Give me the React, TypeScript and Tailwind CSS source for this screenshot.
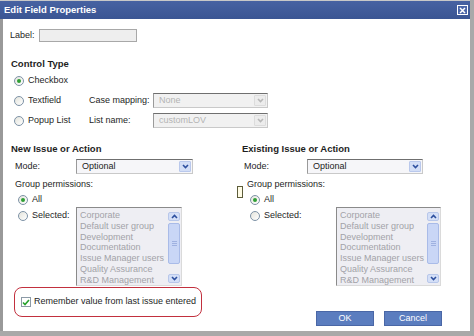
import React from 'react';

const groups = [
  'Corporate',
  'Default user group',
  'Development',
  'Documentation',
  'Issue Manager users',
  'Quality Assurance',
  'R&D Management',
];

function Radio({ checked }: { checked?: boolean }) {
  return (
    <span className="w-[10px] h-[10px] rounded-full border border-[#7d92a6] bg-linear-to-br from-[#e4e4dc] to-white flex items-center justify-center shrink-0">
      {checked && <span className="w-[4px] h-[4px] rounded-full bg-[#2f9f35]" />}
    </span>
  );
}

function Chevron({ up, color }: { up?: boolean; color: string }) {
  return (
    <svg width="7" height="5" viewBox="0 0 7 5">
      <path
        d={up ? 'M1 4 L3.5 1.5 L6 4' : 'M1 1 L3.5 3.5 L6 1'}
        fill="none"
        stroke={color}
        strokeWidth="1.6"
      />
    </svg>
  );
}

function Select({ value, disabled, className }: { value: string; disabled?: boolean; className: string }) {
  return (
    <div
      className={
        'h-[15px] flex items-center border border-[#c9c9c9] border-t-[#6f6f6f] border-l-[#9a9a9a] ' +
        (disabled ? 'bg-[#f1f1f1] ' : 'bg-[#f6f6f9] ') +
        className
      }
    >
      <span className={'flex-1 pl-[5px] ' + (disabled ? 'text-[#b4b4b4]' : 'text-[#222]')}>{value}</span>
      <span
        className={
          'w-[12px] h-[11px] mr-[1px] rounded-[1px] flex items-center justify-center border ' +
          (disabled ? 'bg-[#ececec] border-[#dcdcdc]' : 'bg-[#d3def6] border-[#b9c8ec]')
        }
      >
        <Chevron color={disabled ? '#b8b8b8' : '#2d4f9e'} />
      </span>
    </div>
  );
}

function ListBox({ className }: { className: string }) {
  return (
    <div className={'h-[79px] flex bg-[#eeeef3] border border-[#dadada] border-t-[#8a8a8a] border-l-[#8a8a8a] ' + className}>
      <div className="flex-1 pt-[2px] pl-[3px] text-[#a2a2a8] leading-[10.8px] whitespace-nowrap overflow-hidden">
        {groups.map((g) => (
          <div key={g}>{g}</div>
        ))}
      </div>
      <div className="w-[12px] mr-[1px] pt-[4px] pb-[2px] flex flex-col">
        <div className="h-[9px] rounded-[2px] bg-[#d4dff7] border border-[#b8c7ea] flex items-center justify-center">
          <Chevron up color="#2d4f9e" />
        </div>
        <div className="mt-[2px] h-[41px] rounded-[2px] bg-[#c9d6f6] border border-[#a9bbe8] flex flex-col items-center justify-center gap-[1px]">
          <span className="w-[5px] h-px bg-[#9fb1e0]" />
          <span className="w-[5px] h-px bg-[#9fb1e0]" />
          <span className="w-[5px] h-px bg-[#9fb1e0]" />
        </div>
        <div className="flex-1" />
        <div className="h-[9px] rounded-[2px] bg-[#d4dff7] border border-[#b8c7ea] flex items-center justify-center">
          <Chevron color="#2d4f9e" />
        </div>
      </div>
    </div>
  );
}

export default function App() {
  return (
    <div className="w-[474px] h-[336px] bg-[#a9a9a9] text-[9px] text-[#1e1e1e] font-['Liberation_Sans',Arial,sans-serif] overflow-hidden">
      <div className="w-[470px] h-[331px] bg-white flex flex-col">
        {/* title bar */}
        <div className="h-[19px] shrink-0 bg-linear-to-b from-[#4762a2] to-[#3a5593] flex items-center pl-[4px] pr-[2px] border-t border-[#c8c8c8]">
          <span className="flex-1 text-white font-bold text-[9.5px]">Edit Field Properties</span>
          <span className="w-[11px] h-[10px] border border-white bg-[#4b66a8] flex items-center justify-center">
            <svg width="7" height="7" viewBox="0 0 7 7">
              <path d="M1 1 L6 6 M6 1 L1 6" stroke="white" strokeWidth="1.5" />
            </svg>
          </span>
        </div>

        <div className="flex-1 flex flex-col border-l-[3px] border-[#999]">
          <div className="mt-[10px] h-[13px] flex items-center pl-[7px]">
            <span className="w-[29px]">Label:</span>
            <div className="w-[98px] h-[13px] bg-[#eeeeee] border border-[#a8a8a8]" />
          </div>

          <div className="mt-[17px] h-[10px] flex items-center pl-[8px] font-bold text-[9.5px]">Control Type</div>

          <div className="mt-[7px] h-[10px] flex items-center pl-[11px] gap-[4px]">
            <Radio checked />
            <span>Checkbox</span>
          </div>

          <div className="mt-[7px] h-[15px] flex items-center pl-[11px]">
            <div className="w-[75px] flex items-center gap-[4px]">
              <Radio />
              <span>Textfield</span>
            </div>
            <span className="w-[64px]">Case mapping:</span>
            <Select value="None" disabled className="w-[115px]" />
          </div>

          <div className="mt-[5px] h-[15px] flex items-center pl-[11px]">
            <div className="w-[75px] flex items-center gap-[4px]">
              <Radio />
              <span>Popup List</span>
            </div>
            <span className="w-[64px]">List name:</span>
            <Select value="customLOV" disabled className="w-[115px]" />
          </div>

          <div className="mt-[16px] flex">
            {/* new issue */}
            <div className="w-[232px] flex flex-col">
              <div className="h-[10px] flex items-center pl-[8px] font-bold text-[9.5px]">New Issue or Action</div>
              <div className="mt-[5px] h-[15px] flex items-center pl-[12px]">
                <span className="w-[61px]">Mode:</span>
                <Select value="Optional" className="w-[117px]" />
              </div>
              <div className="mt-[6px] h-[9px] flex items-center pl-[12px]">Group permissions:</div>
              <div className="mt-[6px] h-[10px] flex items-center pl-[15px] gap-[4px]">
                <Radio checked />
                <span>All</span>
              </div>
              <div className="mt-[2px] flex items-start pl-[15px]">
                <div className="w-[58px] mt-[4px] h-[10px] flex items-center gap-[4px]">
                  <Radio />
                  <span>Selected:</span>
                </div>
                <ListBox className="w-[106px]" />
              </div>
            </div>

            {/* existing issue */}
            <div className="flex-1 flex flex-col">
              <div className="h-[10px] flex items-center pl-[7px] font-bold text-[9.5px]">Existing Issue or Action</div>
              <div className="mt-[5px] h-[15px] flex items-center pl-[9px]">
                <span className="w-[63px]">Mode:</span>
                <Select value="Optional" className="w-[116px]" />
              </div>
              <div className="relative mt-[6px] h-[9px] flex items-center pl-[12px]">
                <span className="absolute left-[2px] top-[6px] w-[6px] h-[12px] border border-[#5c5c3a] bg-[#fffce6]" />
                Group permissions:
              </div>
              <div className="mt-[6px] h-[10px] flex items-center pl-[15px] gap-[4px]">
                <Radio checked />
                <span>All</span>
              </div>
              <div className="mt-[2px] flex items-start pl-[15px]">
                <div className="w-[86px] mt-[4px] h-[10px] flex items-center gap-[4px]">
                  <Radio />
                  <span>Selected:</span>
                </div>
                <ListBox className="w-[105px]" />
              </div>
            </div>
          </div>

          <div className="mt-[1px] h-[39px] flex">
            <div className="ml-[11px] w-[188px] h-[30px] self-start rounded-[8px] border-[1.5px] border-[#c2303e] flex items-center pl-[6px] gap-[3px]">
              <span className="w-[10px] h-[10px] border border-[#8c9aa6] bg-white flex items-center justify-center">
                <svg width="8" height="7" viewBox="0 0 8 7">
                  <path d="M1 3.5 L3 5.5 L7 1" fill="none" stroke="#26a12b" strokeWidth="1.6" />
                </svg>
              </span>
              <span>Remember value from last issue entered</span>
            </div>
            <div className="ml-auto mr-[28px] self-end flex gap-[10px]">
              <button className="w-[58px] h-[15px] bg-[#5b7dbf] border border-[#4a67a6] text-white text-[9px] leading-none">OK</button>
              <button className="w-[58px] h-[15px] bg-[#5b7dbf] border border-[#4a67a6] text-white text-[9px] leading-none">Cancel</button>
            </div>
          </div>
        </div>
      </div>
    </div>
  );
}
